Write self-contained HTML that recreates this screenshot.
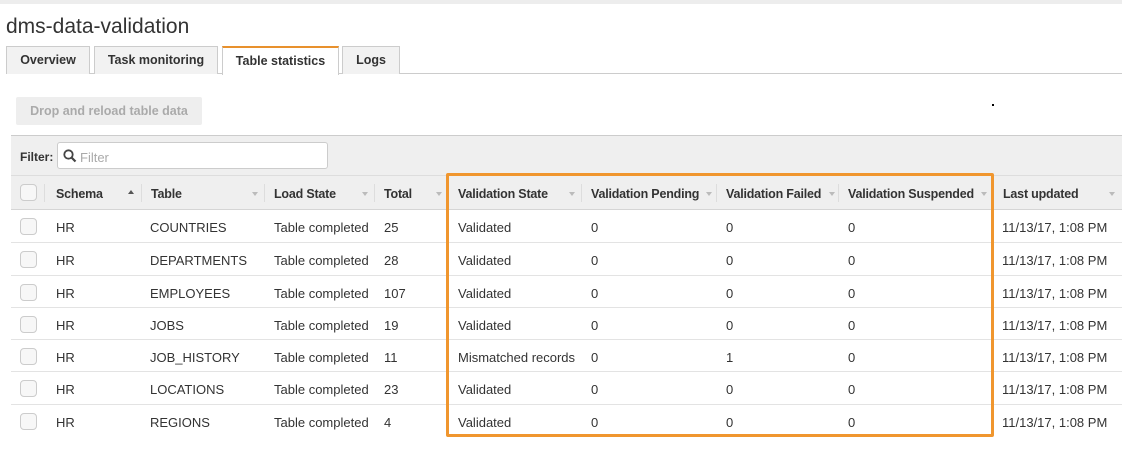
<!DOCTYPE html>
<html><head><style>
*{margin:0;padding:0;box-sizing:border-box}
body{width:1122px;height:470px;background:#fff;font-family:"Liberation Sans",sans-serif;position:relative;overflow:hidden;color:#333}
.a{position:absolute}
.tab{position:absolute;top:46px;height:28px;background:#f2f2f2;border:1px solid #ccc;border-bottom:none;font-weight:bold;font-size:12.5px;color:#333;text-align:center;line-height:27px}
.hd{position:absolute;top:177px;height:34px;font-weight:bold;font-size:12.5px;letter-spacing:-0.2px;color:#333;line-height:34px}
.sep{position:absolute;top:184px;width:1px;height:18px;background:#ddd}
.ar{position:absolute;top:192px;width:0;height:0;border-left:3px solid transparent;border-right:3px solid transparent;border-top:4px solid #bbb}
.row{position:absolute;left:11px;width:1111px;height:32px;border-bottom:1px solid #e3e3e3;font-size:13px;line-height:32px}
.row span{position:absolute;top:2px}
.cb{position:absolute;left:9px;top:8px;width:17px;height:17px;border:1px solid #ccc;border-radius:4px;background:#f7f7f7}
</style></head><body>
<div class="a" style="left:0;top:0;width:1122px;height:4px;background:#ededed"></div>
<div class="a" style="left:6px;top:15px;font-size:21px;color:#333">dms-data-validation</div>
<div class="a" style="left:6px;top:73px;width:1116px;height:1px;background:#ccc"></div>
<div class="tab" style="left:6px;width:84px">Overview</div>
<div class="tab" style="left:94px;width:124px">Task monitoring</div>
<div class="tab" style="left:222px;width:117px;background:#fff;height:29px;border-top:2px solid #e8912d">Table statistics</div>
<div class="tab" style="left:342px;width:58px">Logs</div>
<div class="a" style="left:16px;top:97px;width:186px;height:28px;background:#eee;border-radius:2px;color:#aaa;font-weight:bold;font-size:12.5px;line-height:28px;text-align:center">Drop and reload table data</div>
<div class="a" style="left:992px;top:104px;width:2px;height:2px;background:#000"></div>
<div class="a" style="left:11px;top:135px;width:1111px;height:75px;background:#efefef;border-top:1px solid #ccc;border-bottom:1px solid #d5d5d5"></div>
<div class="a" style="left:11px;top:175px;width:1111px;height:1px;background:#ddd"></div>
<div class="a" style="left:20px;top:150px;font-weight:bold;font-size:12px">Filter:</div>
<div class="a" style="left:57px;top:142px;width:271px;height:27px;background:#fff;border:1px solid #ccc;border-radius:3px"></div>
<svg class="a" style="left:63px;top:149px" width="14" height="14" viewBox="0 0 14 14"><circle cx="5.5" cy="5.5" r="4.2" fill="none" stroke="#444" stroke-width="1.8"/><line x1="8.5" y1="8.5" x2="12.5" y2="12.5" stroke="#444" stroke-width="2.2"/></svg>
<div class="a" style="left:80px;top:150px;font-size:13px;color:#aaa">Filter</div>
<div class="cb" style="left:20px;top:184px"></div>
<div class="sep" style="left:44px"></div>
<div class="hd" style="left:56px">Schema</div>
<div class="a" style="left:128px;top:190px;border-left:3px solid transparent;border-right:3px solid transparent;border-bottom:4px solid #555"></div>
<div class="sep" style="left:141px"></div>
<div class="hd" style="left:151px">Table</div><div class="ar" style="left:252px"></div>
<div class="sep" style="left:264px"></div>
<div class="hd" style="left:274px">Load State</div><div class="ar" style="left:362px"></div>
<div class="sep" style="left:374px"></div>
<div class="hd" style="left:384px">Total</div><div class="ar" style="left:436px"></div>
<div class="hd" style="left:458px">Validation State</div><div class="ar" style="left:569px"></div>
<div class="sep" style="left:581px"></div>
<div class="hd" style="left:591px">Validation Pending</div><div class="ar" style="left:706px"></div>
<div class="sep" style="left:716px"></div>
<div class="hd" style="left:726px">Validation Failed</div><div class="ar" style="left:829px"></div>
<div class="sep" style="left:838px"></div>
<div class="hd" style="left:848px">Validation Suspended</div><div class="ar" style="left:981px"></div>
<div class="hd" style="left:1003px">Last updated</div><div class="ar" style="left:1109px"></div>
<div class="row" style="top:210px;height:33px"><div class="cb"></div><span style="left:45px">HR</span><span style="left:139px">COUNTRIES</span><span style="left:263px">Table completed</span><span style="left:373px">25</span><span style="left:447px">Validated</span><span style="left:580px">0</span><span style="left:715px">0</span><span style="left:837px">0</span><span style="left:991px">11/13/17, 1:08 PM</span></div>
<div class="row" style="top:243px;height:33px"><div class="cb"></div><span style="left:45px">HR</span><span style="left:139px">DEPARTMENTS</span><span style="left:263px">Table completed</span><span style="left:373px">28</span><span style="left:447px">Validated</span><span style="left:580px">0</span><span style="left:715px">0</span><span style="left:837px">0</span><span style="left:991px">11/13/17, 1:08 PM</span></div>
<div class="row" style="top:276px"><div class="cb"></div><span style="left:45px">HR</span><span style="left:139px">EMPLOYEES</span><span style="left:263px">Table completed</span><span style="left:373px">107</span><span style="left:447px">Validated</span><span style="left:580px">0</span><span style="left:715px">0</span><span style="left:837px">0</span><span style="left:991px">11/13/17, 1:08 PM</span></div>
<div class="row" style="top:308px"><div class="cb"></div><span style="left:45px">HR</span><span style="left:139px">JOBS</span><span style="left:263px">Table completed</span><span style="left:373px">19</span><span style="left:447px">Validated</span><span style="left:580px">0</span><span style="left:715px">0</span><span style="left:837px">0</span><span style="left:991px">11/13/17, 1:08 PM</span></div>
<div class="row" style="top:340px"><div class="cb"></div><span style="left:45px">HR</span><span style="left:139px">JOB_HISTORY</span><span style="left:263px">Table completed</span><span style="left:373px">11</span><span style="left:447px">Mismatched records</span><span style="left:580px">0</span><span style="left:715px">1</span><span style="left:837px">0</span><span style="left:991px">11/13/17, 1:08 PM</span></div>
<div class="row" style="top:372px;height:33px"><div class="cb"></div><span style="left:45px">HR</span><span style="left:139px">LOCATIONS</span><span style="left:263px">Table completed</span><span style="left:373px">23</span><span style="left:447px">Validated</span><span style="left:580px">0</span><span style="left:715px">0</span><span style="left:837px">0</span><span style="left:991px">11/13/17, 1:08 PM</span></div>
<div class="row" style="top:405px;border-bottom:none"><div class="cb"></div><span style="left:45px">HR</span><span style="left:139px">REGIONS</span><span style="left:263px">Table completed</span><span style="left:373px">4</span><span style="left:447px">Validated</span><span style="left:580px">0</span><span style="left:715px">0</span><span style="left:837px">0</span><span style="left:991px">11/13/17, 1:08 PM</span></div>
<div class="a" style="left:446px;top:173px;width:548px;height:264px;border:3px solid #f0962e;border-radius:2px"></div>
</body></html>
